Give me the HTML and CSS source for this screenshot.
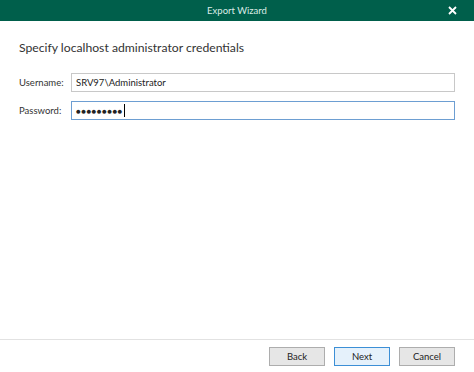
FILE: index.html
```html
<!DOCTYPE html>
<html lang="en">
<head>
  <meta charset="UTF-8">
  <title>Export Wizard</title>
  <link rel="stylesheet" href="styles.css">
</head>
<body>
  <div class="window">
    <header class="titlebar">
      <span class="title">Export Wizard</span>
      <span class="close">
        <svg width="9" height="9" viewBox="0 0 9 9"><path d="M1 1L8 8M8 1L1 8" stroke="#fff" stroke-width="1.8"/></svg>
      </span>
    </header>

    <main class="content">
      <h1>Specify localhost administrator credentials</h1>
      <div class="row">
        <label for="user">Username:</label>
        <div class="field">SRV97\Administrator</div>
      </div>
      <div class="row">
        <label for="pass">Password:</label>
        <div class="field active">&#9679;&#9679;&#9679;&#9679;&#9679;&#9679;&#9679;&#9679;&#9679;<span class="caret"></span></div>
      </div>
    </main>

    <footer class="buttons">
      <button>Back</button>
      <button class="default">Next</button>
      <button>Cancel</button>
    </footer>
  </div>
</body>
</html>
```

FILE: styles.css
```css
* {
  margin: 0;
  padding: 0;
  box-sizing: border-box;
}

body {
  font-family: Lato, "Open Sans", sans-serif;
  background: #fff;
  width: 474px;
  height: 372px;
  overflow: hidden;
}

.window {
  display: flex;
  flex-direction: column;
  height: 372px;
}

.titlebar {
  position: relative;
  height: 21px;
  background: #005f4b;
  display: flex;
  align-items: center;
  justify-content: center;
}

.title {
  color: #dcebe6;
  font-size: 9.5px;
}

.close {
  position: absolute;
  right: 17px;
  top: 6px;
  display: flex;
}

.content {
  flex: 1;
  padding: 19px 19px 0 19px;
}

h1 {
  font-weight: normal;
  font-size: 12.2px;
  color: #333;
  margin-bottom: 18px;
}

.row {
  display: flex;
  align-items: center;
  margin-bottom: 9px;
}

label {
  width: 52px;
  font-size: 9.5px;
  color: #333;
}

.field {
  width: 384px;
  height: 19px;
  border: 1px solid #c8c8c8;
  font-size: 9.5px;
  color: #222;
  padding: 0 4px;
  display: flex;
  align-items: center;
}

.field.active {
  border-color: #6d9ed2;
  font-size: 8px;
  letter-spacing: 0.4px;
}

.caret {
  display: inline-block;
  width: 1px;
  height: 13px;
  margin-left: 1px;
  background: #000;
}

.buttons {
  border-top: 1px solid #e2e2e2;
  height: 33px;
  display: flex;
  justify-content: flex-end;
  align-items: flex-start;
  gap: 9px;
  padding: 7px 19px 0 0;
}

button {
  width: 56px;
  height: 19px;
  font-family: inherit;
  font-size: 9.5px;
  color: #222;
  background: #e6e6e6;
  border: 1px solid #adadad;
}

button.default {
  border-color: #3c8fd6;
  background: #e5f1fb;
}
```
